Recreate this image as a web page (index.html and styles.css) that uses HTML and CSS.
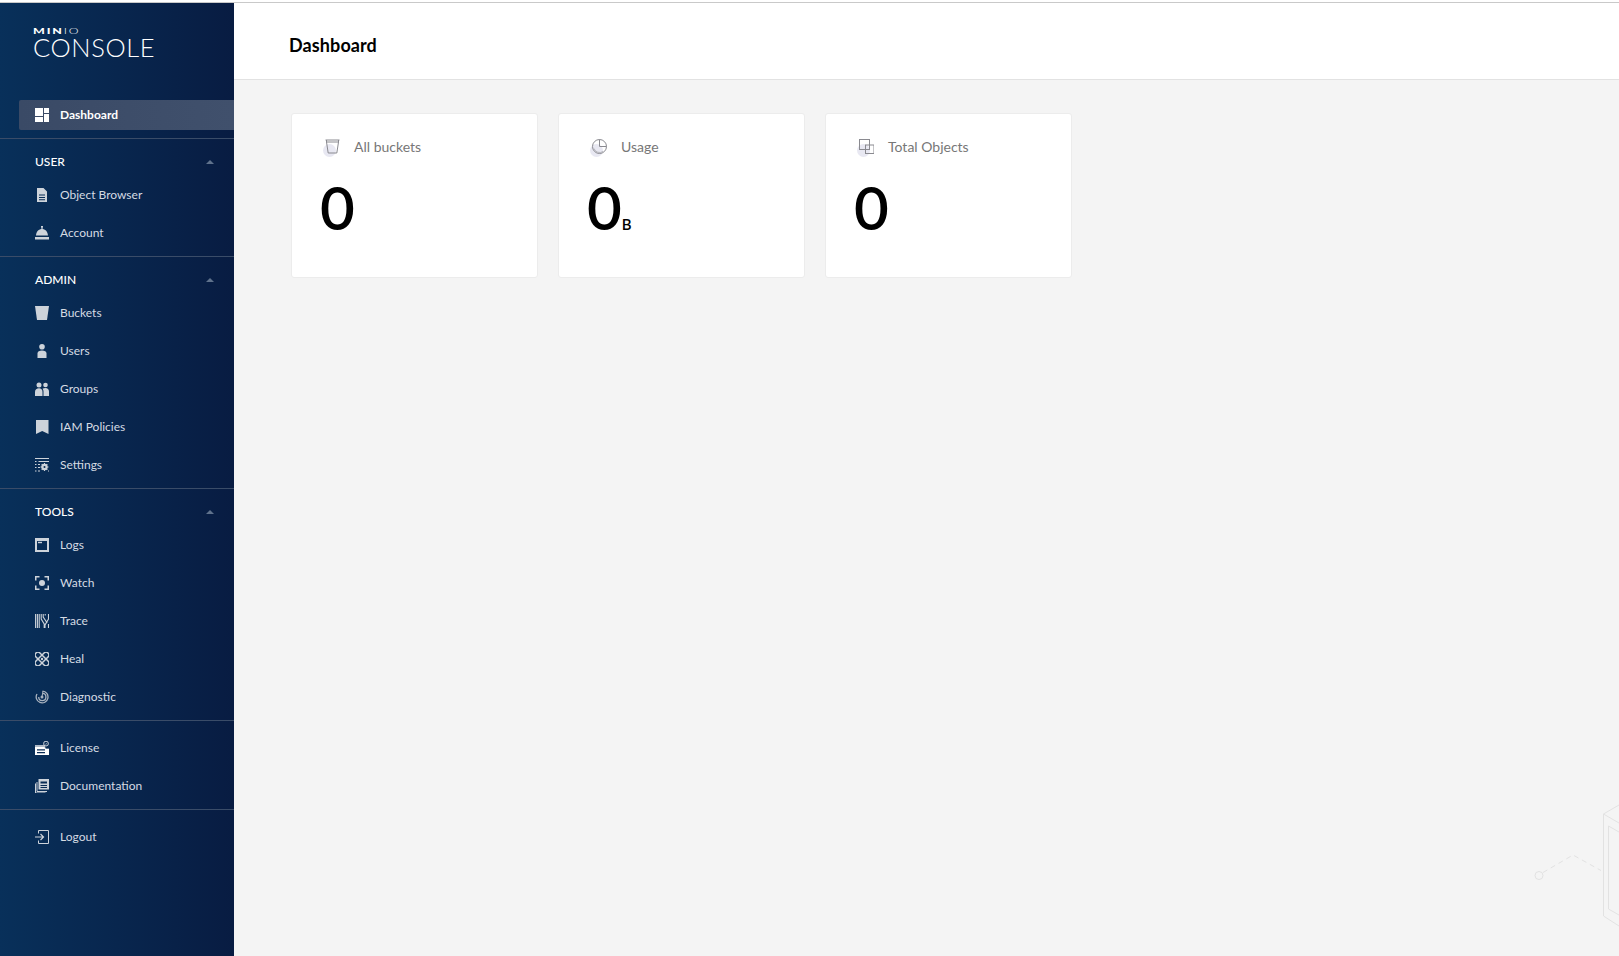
FILE: index.html
```html
<!DOCTYPE html>
<html lang="en">

<head>
    <meta charset="UTF-8">
    <title>MinIO Console</title>
    <link rel="stylesheet" href="styles.css">
</head>

<body>
    <div class="app">
        <aside class="sidebar">
            <div class="logo">
                <div class="logo-top"><b>MIN</b>IO</div>
                <div class="logo-name">CONSOLE</div>
            </div>

            <nav>
                <div class="nav-group nav-first">
                    <a class="item active">
                        <svg class="icon" viewBox="0 0 14 14"><path d="M0 0h8v8H0zM9 0h5v5H9zM9 6h5v8H9zM0 9h8v5H0z" fill="currentColor"/></svg>
                        Dashboard
                    </a>
                </div>

                <div class="nav-group">
                    <div class="group-title">USER <span class="caret"></span></div>
                    <a class="item">
                        <svg class="icon" viewBox="0 0 14 14"><path d="M2 0h6.500L12 3.500V14H2zM4 6.500v1h6v-1zM4 9v1h6V9zM4 11.300v1h6v-1z" fill="currentColor" fill-rule="evenodd"/></svg>
                        Object Browser
                    </a>
                    <a class="item">
                        <svg class="icon" viewBox="0 0 14 14"><path d="M6 0h2v1.500H7.600v1.600C10.800 3.400 12.700 6 13 9.500H1C1.300 6 3.200 3.400 6.400 3.100V1.500H6zM0 11h14v2.500H0z" fill="currentColor"/></svg>
                        Account
                    </a>
                </div>

                <div class="nav-group">
                    <div class="group-title">ADMIN <span class="caret"></span></div>
                    <a class="item">
                        <svg class="icon" viewBox="0 0 14 14"><path d="M0 0h14l-2 14H2z" fill="currentColor"/></svg>
                        Buckets
                    </a>
                    <a class="item">
                        <svg class="icon" viewBox="0 0 14 14"><circle cx="7" cy="2.800" r="2.800" fill="currentColor"/><path d="M2.500 14V9.500C2.500 7.200 4.500 6.500 7 6.500s4.500.7 4.500 3V14z" fill="currentColor"/></svg>
                        Users
                    </a>
                    <a class="item">
                        <svg class="icon" viewBox="0 0 14 14"><circle cx="4" cy="3" r="2.500" fill="currentColor"/><circle cx="10.500" cy="3" r="2.300" fill="currentColor"/><path d="M0 14v-4c0-2.500 1.800-3.700 4-3.700s3.500 1.200 3.500 3.700v4zM8.500 14V9.500c0-1.200-.4-2.200-1-2.800.8-.4 1.800-.6 3-.6 2.100 0 3.500 1.200 3.500 3.500V14z" fill="currentColor"/></svg>
                        Groups
                    </a>
                    <a class="item">
                        <svg class="icon" viewBox="0 0 14 14"><path d="M1 0h12.500v14L7.200 11 1 14z" fill="currentColor"/></svg>
                        IAM Policies
                    </a>
                    <a class="item">
                        <svg class="icon" viewBox="0 0 14 14"><path d="M0 .5h14M3.500 3.500H14M0 6.500h1.500M3 6.500h2M0 9.500h1.500M3 9.500h2M0 13h1.500M3 13h2" stroke="currentColor" fill="none"/><path d="M0 3.500h1.500M13 13h1" stroke="currentColor"/><circle cx="9.500" cy="9" r="2.200" fill="none" stroke="currentColor" stroke-width="2"/><path d="M9.500 5v8M5.500 9h8M6.700 6.200l5.600 5.600M12.300 6.200l-5.600 5.600" stroke="currentColor" stroke-width="1.200"/><circle cx="9.500" cy="9" r="1" fill="#062a50"/></svg>
                        Settings
                    </a>
                </div>

                <div class="nav-group">
                    <div class="group-title">TOOLS <span class="caret"></span></div>
                    <a class="item">
                        <svg class="icon" viewBox="0 0 14 14"><path d="M0 0h14v14H0zM2 3v9h10V3z" fill="currentColor" fill-rule="evenodd"/><path d="M3 3.800h4v1.400H3z" fill="currentColor"/></svg>
                        Logs
                    </a>
                    <a class="item">
                        <svg class="icon" viewBox="0 0 14 14"><path d="M0 4.500V0h4.500v1.500h-3v3zM9.500 0H14v4.500h-1.500v-3h-3zM14 9.500V14H9.500v-1.500h3v-3zM4.500 14H0V9.500h1.500v3h3z" fill="currentColor"/><circle cx="7" cy="7" r="3" fill="currentColor"/></svg>
                        Watch
                    </a>
                    <a class="item">
                        <svg class="icon" viewBox="0 0 14 14"><path d="M.6 0v14M2.400 0v14M4.200 0v14M6.200 0v5l3 5v4M8.200 0v3l4 6M10.200 0v1.500M13.500 0v5l-3.500 6v3M13.500 10v4" stroke="currentColor" stroke-width="1.100" fill="none"/></svg>
                        Trace
                    </a>
                    <a class="item">
                        <svg class="icon" viewBox="0 0 14 14"><g fill="none" stroke="currentColor" stroke-width="1.500"><rect x="-1.500" y="4.200" width="17" height="5.600" rx="2.800" transform="rotate(45 7 7)"/><rect x="-1.500" y="4.200" width="17" height="5.600" rx="2.800" transform="rotate(-45 7 7)"/></g><circle cx="7" cy="7" r="1.200" fill="currentColor"/></svg>
                        Heal
                    </a>
                    <a class="item">
                        <svg class="icon icon-dim" viewBox="0 0 14 14"><g fill="none" stroke="currentColor" stroke-width="1.300"><path d="M7.500 1.100A5.900 5.900 0 1 1 2 4"/><path d="M7.500 3.400A3.600 3.600 0 1 1 3.700 7"/></g><circle cx="7" cy="7" r="1.500" fill="currentColor"/><path d="M7 7L8 1" stroke="currentColor" stroke-width="1"/></svg>
                        Diagnostic
                    </a>
                </div>

                <div class="nav-group nav-plain">
                    <a class="item">
                        <svg class="icon" viewBox="0 0 14 14"><path d="M0 4h10v1a3.500 3.500 0 0 0 1 2.500h3V14H0z" fill="currentColor" opacity=".85"/><path d="M0 6h9.500L10 7.500l1 .5h3v6H0z" fill="#fff"/><path d="M2 8.300h8v1.300H2zM2 11h8v1.300H2z" fill="#0a2c55"/><circle cx="11" cy="2.600" r="2.400" fill="none" stroke="currentColor"/><path d="M10 2.600l.8.8 1.300-1.300" fill="none" stroke="currentColor" stroke-width=".7"/></svg>
                        License
                    </a>
                    <a class="item">
                        <svg class="icon" viewBox="0 0 14 14"><path d="M3.500 0H14v10.500H3.500zM5.500 2.500v2h6.500v-2zM5.500 6v1h6.500V6zM5.500 8v1h6.500V8z" fill="currentColor" fill-rule="evenodd"/><path d="M2 3v9.500h10M.5 4.500V14h10" fill="none" stroke="currentColor" stroke-width="1"/></svg>
                        Documentation
                    </a>
                </div>

                <div class="nav-group nav-plain">
                    <a class="item">
                        <svg class="icon" viewBox="0 0 14 14"><path d="M3.500 3.500V.5h10v13h-10v-3" fill="none" stroke="currentColor"/><path d="M0 7h8M5.500 4l3 3-3 3" fill="none" stroke="currentColor" stroke-width="1.200"/></svg>
                        Logout
                    </a>
                </div>
            </nav>
        </aside>

        <main class="main">
            <header class="page-header">Dashboard</header>

            <section class="cards">
                <div class="card">
                    <div class="card-label">
                        <span class="card-icon">
                            <svg viewBox="0 0 15 15"><path d="M.5 1h14M1.500 1v2l1.700 11h8.600L13.500 3V1M1.500 3h12" fill="none" stroke="#8a8a90"/></svg>
                        </span>
                        All buckets
                    </div>
                    <div class="card-value">0</div>
                </div>
                <div class="card">
                    <div class="card-label">
                        <span class="card-icon">
                            <svg viewBox="0 0 15 15"><circle cx="7.500" cy="7.500" r="7" fill="none" stroke="#8a8a90"/><path d="M7.500 .5v7h7" fill="none" stroke="#8a8a90"/><path d="M2 9.500a6 6 0 0 0 9 3" fill="none" stroke="#b5b5bb"/></svg>
                        </span>
                        Usage
                    </div>
                    <div class="card-value">0<span class="unit">B</span></div>
                </div>
                <div class="card">
                    <div class="card-label">
                        <span class="card-icon">
                            <svg viewBox="0 0 15 15"><rect x=".5" y=".5" width="10" height="10" fill="none" stroke="#8a8a90"/><rect x="6.500" y="6" width="8.500" height="8.500" fill="none" stroke="#8a8a90"/></svg>
                        </span>
                        Total Objects
                    </div>
                    <div class="card-value">0</div>
                </div>
            </section>

            <!-- decoracion de fondo -->
            <svg class="bg-art" viewBox="0 0 119 176">
                <g fill="none" stroke="#e2e2e2" stroke-width="1">
                    <circle cx="39" cy="95.500" r="4"/>
                    <path d="M43 92.500L73 75 101 90.500" stroke-dasharray="5 4"/>
                    <path d="M103.500 34v102M108.500 46v83M103.500 34L119 25M103.500 34L119 43M108.500 46L119 52M103.500 136L119 146M108.500 129L119 135"/>
                </g>
            </svg>
        </main>
    </div>
</body>

</html>
```
FILE: styles.css
```css
html,
body {
    height: 100%;
}

body {
    margin: 0;
    padding-top: 2px;
    box-sizing: border-box;
    background-color: #fff;
    font-family: "Lato", sans-serif;
    overflow: hidden;
}

.app {
    display: flex;
    height: 100%;
    box-sizing: border-box;
    border-top: 1px solid #c9c9c9;
}

/* barra lateral */
.sidebar {
    width: 234px;
    flex-shrink: 0;
    background: linear-gradient(to right, #08305a, #081c42);
    color: #d5dbe3;
}

.logo {
    height: 97px;
    box-sizing: border-box;
    padding: 24px 0 0 33px;
    color: #fff;
}

.logo-top {
    font-size: 8px;
    line-height: 9px;
    font-weight: 300;
    letter-spacing: 1.2px;
    transform: scaleX(1.55);
    transform-origin: left;
}

.logo-top b {
    font-weight: 900;
}

.logo-name {
    font-size: 25.500px;
    line-height: 22px;
    font-weight: 300;
    letter-spacing: 0.6px;
}

.nav-group {
    padding: 13px 0 4px;
    border-top: 1px solid #3a4c68;
}

.nav-first {
    padding: 0 0 8px 19px;
    border-top: none;
}

.nav-plain {
    padding-top: 8px;
}

.group-title {
    display: flex;
    align-items: center;
    justify-content: space-between;
    height: 20px;
    box-sizing: border-box;
    padding: 0 20px 2px 35px;
    margin-bottom: 4px;
    font-size: 12px;
    font-weight: 500;
    color: #fff;
}

.caret {
    width: 0;
    height: 0;
    margin-top: 2px;
    border-left: 4px solid transparent;
    border-right: 4px solid transparent;
    border-bottom: 4px solid #5f728c;
}

.item {
    display: flex;
    align-items: center;
    height: 38px;
    box-sizing: border-box;
    padding: 0 0 2px 35px;
    font-size: 12px;
}

.icon {
    width: 14px;
    height: 14px;
    margin: 2px 11px 0 0;
    flex-shrink: 0;
    color: #cdd3da;
}

.icon-dim {
    color: #a9b3bf;
}

.item.active {
    height: 30px;
    padding-left: 16px;
    border-radius: 2px 0 0 2px;
    background: linear-gradient(to right, #3a4a66, #40506c);
    color: #fff;
    font-weight: 700;
}

.item.active .icon {
    color: #fff;
}

/* contenido */
.main {
    position: relative;
    flex: 1;
    display: flex;
    flex-direction: column;
    background-color: #f4f4f4;
}

.page-header {
    height: 77px;
    box-sizing: border-box;
    padding: 8px 55px 0;
    display: flex;
    align-items: center;
    background-color: #fff;
    border-bottom: 1px solid #e2e2e2;
    font-size: 18px;
    font-weight: 700;
    letter-spacing: 0.1px;
    color: #000;
}

.cards {
    display: flex;
    gap: 20px;
    padding: 33px 57px;
}

.card {
    width: 247px;
    height: 165px;
    box-sizing: border-box;
    padding: 23px 28px;
    background-color: #fff;
    border: 1px solid #ececec;
    border-radius: 3px;
}

.card-label {
    display: flex;
    align-items: center;
    height: 18px;
    font-size: 14px;
    color: #777;
}

.card-icon {
    position: relative;
    width: 16px;
    height: 15px;
    margin: 0 13px 0 5px;
}

.card-icon svg {
    position: relative;
    display: block;
    width: 15px;
    height: 15px;
}

/* circulo detras del icono */
.card-icon::before {
    content: "";
    position: absolute;
    left: -2px;
    top: 5px;
    width: 13px;
    height: 13px;
    border-radius: 50%;
    background-color: #e8e8f2;
}

.card-value {
    margin-top: 16px;
    font-size: 60px;
    line-height: 72px;
    font-weight: 600;
    color: #000;
}

.unit {
    font-size: 15px;
    line-height: 15px;
}

.bg-art {
    position: absolute;
    right: 0;
    bottom: 0;
    width: 119px;
    height: 176px;
}
```
